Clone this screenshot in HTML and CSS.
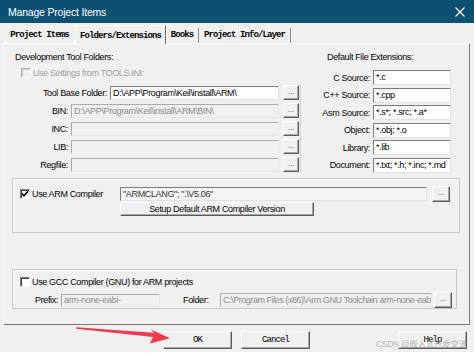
FILE: index.html
```html
<!DOCTYPE html>
<html>
  <head>
    <title>Manage Project Items</title>
    <link rel="stylesheet" href="styles.css">
  </head>
  <body>
    <div class="dialog">
      <div class="titlebar">
        <span class="title">Manage Project Items</span>
        <svg class="close" width="10" height="10" viewBox="0 0 10 10"><path d="M0.5 0.5 L9.5 9.5 M9.5 0.5 L0.5 9.5" stroke="#fff" stroke-width="1.1"/></svg>
      </div>

      <div class="tabs">
        <span class="tab first">Project Items</span>
        <span class="tab active">Folders/Extensions</span>
        <span class="tab books">Books</span>
        <span class="tab info">Project Info/Layer</span>
      </div>

      <div class="panel">
        <div class="top">
          <div class="folders">
            <div class="heading">Development Tool Folders:</div>
            <div class="ini"><span class="check disabled"></span><span class="lbl">Use Settings from TOOLS.INI:</span></div>
            <div class="dirs">
              <div class="dir"><span>Tool Base Folder:</span><div class="field base">D:\APP\Program\Keil\install\ARM\</div><div class="btn dots">...</div></div>
              <div class="dir"><span>BIN:</span><div class="field wide off">D:\APP\Program\Keil\install\ARM\BIN\</div><div class="btn dots">...</div></div>
              <div class="dir"><span>INC:</span><div class="field wide off"></div><div class="btn dots">...</div></div>
              <div class="dir"><span>LIB:</span><div class="field wide off"></div><div class="btn dots">...</div></div>
              <div class="dir"><span>Regfile:</span><div class="field wide off"></div><div class="btn dots">...</div></div>
            </div>
          </div>

          <div class="exts">
            <div class="heading ext-head">Default File Extensions:</div>
            <div class="ext-rows">
              <div class="ext"><span>C Source:</span><div class="field ext-field">*.c</div></div>
              <div class="ext"><span>C++ Source:</span><div class="field ext-field">*.cpp</div></div>
              <div class="ext"><span>Asm Source:</span><div class="field ext-field">*.s*; *.src; *.a*</div></div>
              <div class="ext"><span>Object:</span><div class="field ext-field">*.obj; *.o</div></div>
              <div class="ext"><span>Library:</span><div class="field ext-field">*.lib</div></div>
              <div class="ext"><span>Document:</span><div class="field ext-field">*.txt; *.h; *.inc; *.md</div></div>
            </div>
          </div>
        </div>

        <div class="group arm">
          <div class="arm-row">
            <div class="check-label"><span class="check on"><svg width="8" height="8" viewBox="0 0 8 8"><path d="M1 3.5 L3 5.8 L7 1.2" fill="none" stroke="#000" stroke-width="1.6"/></svg></span><span class="lbl">Use ARM Compiler</span></div>
            <div class="field compiler">"ARMCLANG"; ".\V5.06"</div>
            <div class="btn dots arm-dots">...</div>
          </div>
          <div class="btn setup">Setup Default ARM Compiler Version</div>
        </div>

        <div class="group gcc">
          <div class="gcc-row"><span class="check"></span><span class="lbl">Use GCC Compiler (GNU) for ARM projects</span></div>
          <div class="gcc-row2">
            <span class="prefix-lbl">Prefix:</span>
            <div class="field off prefix">arm-none-eabi-</div>
            <span class="folder-lbl">Folder:</span>
            <div class="field off folder">C:\Program Files (x86)\Arm GNU Toolchain arm-none-eabi\</div>
            <div class="btn dots gcc-dots">...</div>
          </div>
        </div>
      </div>

      <div class="buttons">
        <div class="btn push ok">OK</div>
        <div class="btn push cancel">Cancel</div>
        <div class="btn push help">Help</div>
      </div>

      <svg class="arrow" width="474" height="354" viewBox="0 0 474 354">
        <polygon points="76,327.2 154,332.8 151,329.4 170,338.2 150,343.6 153,336.9 76,328.8" fill="#ee3a4e"/>
      </svg>
      <div class="watermark">CSDN @嵌入式开发交流</div>
    </div>
  </body>
</html>
```

FILE: styles.css
```css
body {
  margin: 0;
  background: #fff;
  font-family: "Liberation Sans", Arial, sans-serif;
  font-size: 9px;
  letter-spacing: -0.35px;
  color: #000;
}
.dialog { position: relative; width: 474px; height: 352px; background: #f0f0f0; }

.titlebar {
  height: 23px;
  background: #0d5073;
  color: #fff;
  display: flex;
  align-items: center;
  justify-content: space-between;
  padding: 0 9px 0 8px;
  box-sizing: border-box;
}
.title { font-size: 10.5px; letter-spacing: -0.2px; }

/* tabs */
.tabs { display: flex; align-items: flex-end; height: 20px; padding-left: 4px; }
.tab {
  font-family: "Liberation Mono", "Courier New", monospace;
  font-weight: bold;
  font-size: 9px;
  letter-spacing: -0.9px;
  text-align: center;
  height: 15px;
  line-height: 15px;
  box-sizing: border-box;
  border-right: 1px solid #8a8a8a;
}
.tab.first { width: 71px; border-right: none; }
.tab.active {
  width: 91px;
  height: 19px;
  padding-top: 3px;
  line-height: 15px;
  margin-bottom: -1px;
  background: #f0f0f0;
  border-left: 1px solid #fff;
  border-top: 1px solid #fff;
  border-right: 1px solid #6a6a6a;
  position: relative;
  z-index: 1;
}
.tab.books { width: 33px; }
.tab.info { width: 92px; }

/* tab page */
.panel {
  margin-left: 3px;
  width: 467px;
  height: 282px;
  box-sizing: border-box;
  border: 1px solid;
  border-color: #fff #7a7a7a #7a7a7a #fff;
}
.top { display: flex; height: 128px; }
.folders { width: 297px; }
.heading { padding: 7px 0 0 11px; line-height: 12px; }
.ext-head { padding-left: 26px; }

.ini { display: flex; align-items: center; height: 12px; margin: 4px 0 0 17px; color: #a0a0a0; }
.lbl { margin-left: 2px; }

.dirs {
  margin-top: 6px;
  display: flex;
  flex-direction: column;
  gap: 3px;
  padding-right: 1px;
  border-right: 1px solid #cfcfcf;
}
.dir { display: flex; justify-content: flex-end; align-items: center; height: 15px; }
.dir .field { margin-left: 3px; }
.dir .dots { margin-left: 4px; }

.exts { flex: 1; }
.ext-rows { margin-top: 7px; display: flex; flex-direction: column; gap: 2.5px; padding-right: 18px; }
.ext { display: flex; justify-content: flex-end; align-items: center; height: 15px; }
.ext .field { margin-left: 3px; }

/* inputs */
.field {
  height: 14px;
  line-height: 12px;
  box-sizing: border-box;
  padding-left: 2px;
  background: #fff;
  border: 1px solid;
  border-color: #7a7a7a #e3e3e3 #e3e3e3 #7a7a7a;
  white-space: nowrap;
  overflow: hidden;
}
.field.off { background: #f0f0f0; color: #8a8a8a; border-color: #a9a9a9 #e8e8e8 #e8e8e8 #a9a9a9; }
.base { width: 169px; }
.wide { width: 208px; }
.ext-field { width: 78px; height: 15px; line-height: 13px; }

/* buttons */
.btn {
  box-sizing: border-box;
  background: #f0f0f0;
  border: 1px solid;
  border-color: #fff #5a5a5a #5a5a5a #fff;
  box-shadow: inset -1px -1px #a8a8a8;
  text-align: center;
}
.dots { width: 16px; height: 15px; line-height: 11px; font-size: 8px; letter-spacing: 0; color: #444; }

/* checkboxes */
.check {
  display: inline-flex;
  align-items: center;
  justify-content: center;
  width: 10px;
  height: 10px;
  box-sizing: border-box;
  background: #fff;
  border: 1px solid;
  border-color: #808080 #fff #fff #808080;
  box-shadow: inset 1px 1px #404040;
}
.check.disabled { background: #f0f0f0; border-color: #b0b0b0 #fff #fff #b0b0b0; box-shadow: inset 1px 1px #c8c8c8; }

/* groups */
.group {
  margin-left: 8px;
  box-sizing: border-box;
  border: 1px solid #c6c6c6;
  box-shadow: inset 1px 1px #fff;
}
.arm { margin-top: 6px; width: 448px; height: 55px; padding: 7px 0 0 7px; }
.arm-row { display: flex; align-items: center; height: 16px; }
.check-label { display: flex; align-items: center; width: 100px; }
.compiler { width: 307px; background: #f4f4f4; color: #333; }
.arm-dots { margin-left: 5px; width: 18px; height: 16px; }
.setup { margin-left: 100px; width: 194px; height: 14px; line-height: 12px; }

.gcc { margin-top: 36px; width: 445px; height: 40px; padding: 6px 0 0 7px; }
.gcc-row { display: flex; align-items: center; height: 12px; }
.gcc-row2 { display: flex; align-items: center; height: 16px; margin-top: 4px; }
.prefix-lbl { margin-left: 15px; width: 26px; }
.prefix { width: 99px; height: 13px; line-height: 11px; }
.folder-lbl { margin-left: 23px; width: 37px; }
.folder { width: 212px; letter-spacing: -0.45px; }
.gcc-dots { margin-left: 2px; width: 18px; height: 16px; }

/* dialog buttons */
.buttons { display: flex; height: 27px; padding-top: 6px; box-sizing: border-box; }
.push {
  width: 69px;
  height: 18px;
  line-height: 16px;
  font-family: "Liberation Mono", "Courier New", monospace;
  font-size: 9px;
  letter-spacing: -0.9px;
}
.ok { margin-left: 163px; }
.cancel { margin-left: 9px; }
.help { margin-left: 88px; }

/* overlays */
.arrow { position: absolute; left: 0; top: 0; pointer-events: none; }
.watermark {
  position: absolute;
  left: 376px;
  top: 337px;
  white-space: nowrap;
  font-family: "Liberation Sans", "Noto Sans CJK SC", sans-serif;
  font-size: 8.5px;
  letter-spacing: -0.3px;
  color: rgba(150, 150, 150, 0.7);
}
```
